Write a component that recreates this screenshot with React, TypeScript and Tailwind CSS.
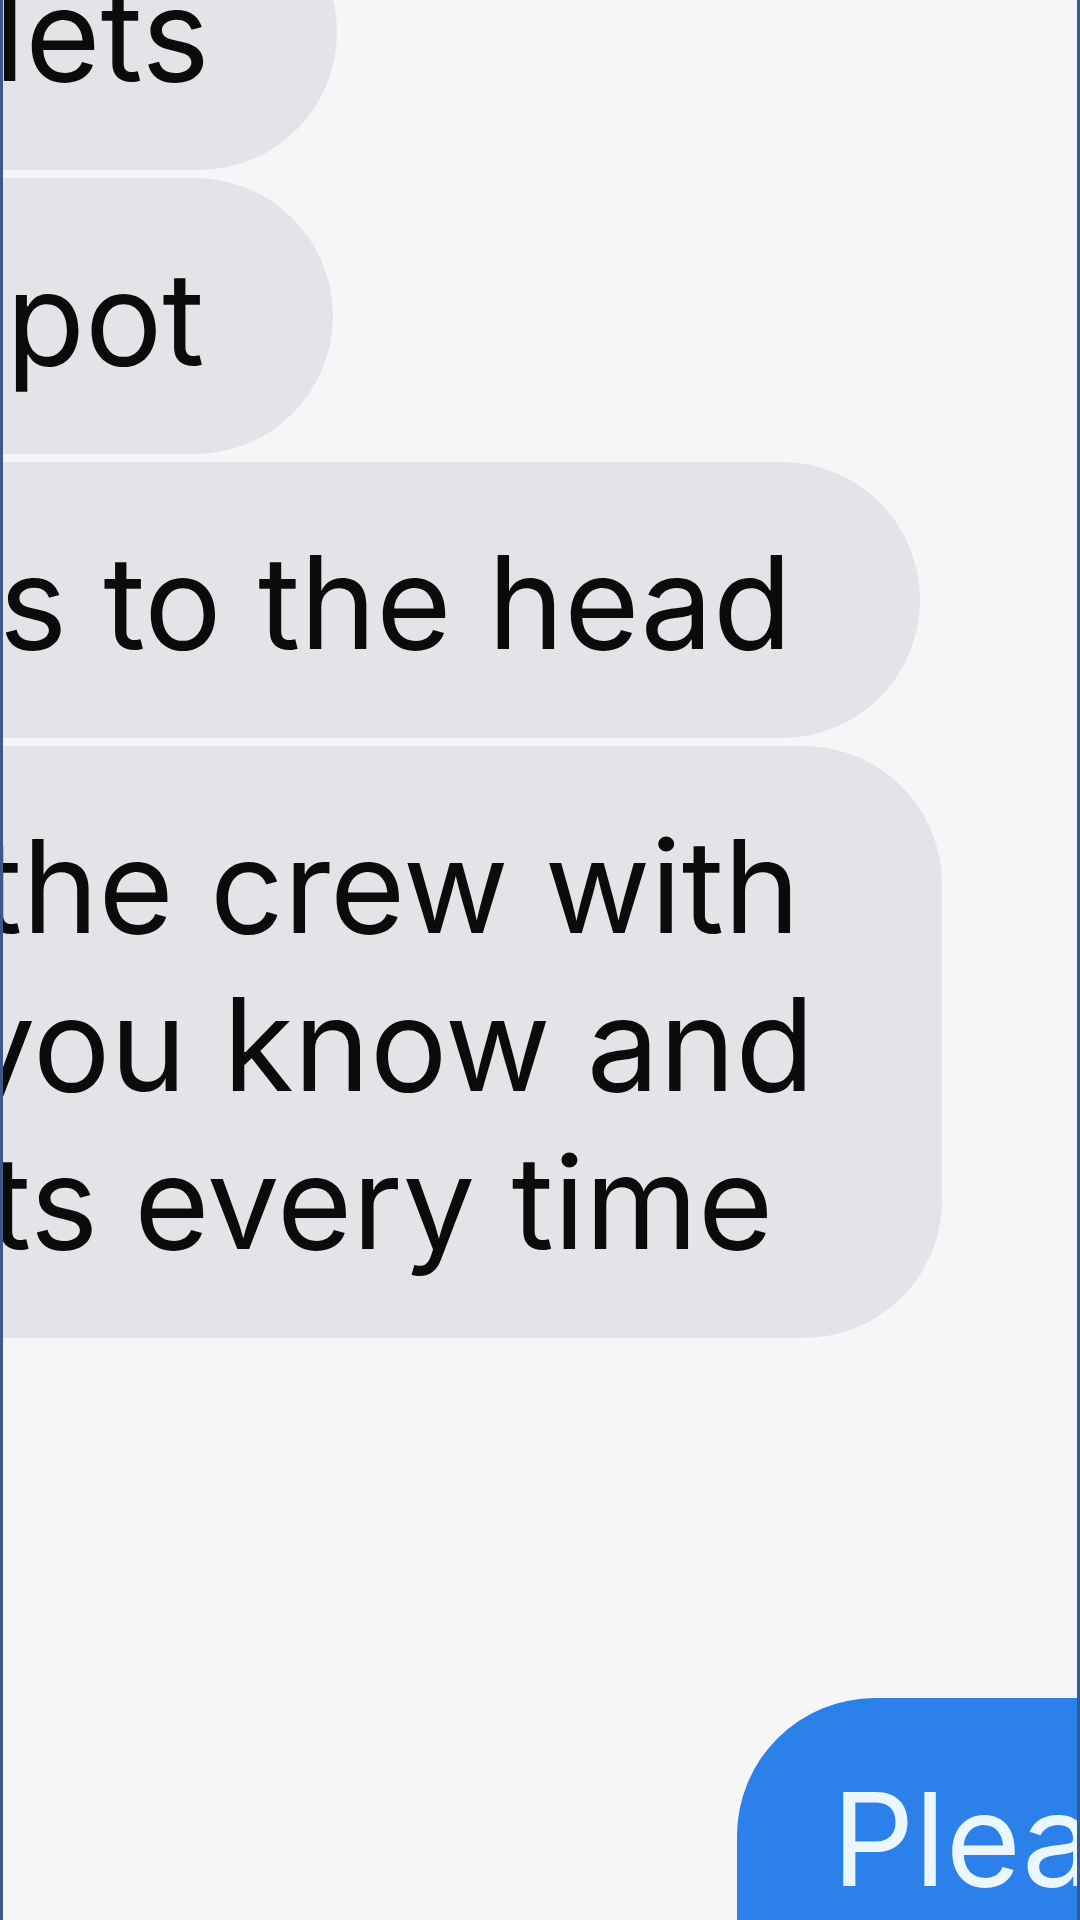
import React from "react";

type Line = { text: string; cls: string };

function Bubble({ lines }: { lines: Line[] }) {
  return (
    <div className="w-fit -ml-[200px] pl-[200px] pr-[128px] pt-[61px] pb-[57px] rounded-[138px] bg-[#e3e3e8] text-[129px] leading-[158px] text-[#0b0b0b]">
      {lines.map((l, i) => (
        <div key={i} className={l.cls}>
          {l.text}
        </div>
      ))}
    </div>
  );
}

export default function App() {
  return (
    <div className="relative w-[1080px] h-[1920px] overflow-hidden bg-[#f6f6f8] font-['Inter','Noto_Sans',sans-serif]">
      <div className="flex flex-col items-start gap-[8px] -mt-[106px]">
        <Bubble lines={[{ text: "lets", cls: "whitespace-nowrap -ml-[6px]" }]} />
        <Bubble lines={[{ text: "pot", cls: "whitespace-nowrap ml-[6px]" }]} />
        <Bubble lines={[{ text: "ts to the head", cls: "whitespace-nowrap -ml-[42px]" }]} />
        <Bubble
          lines={[
            { text: "the crew with", cls: "whitespace-nowrap -ml-[20px]" },
            { text: "you know and", cls: "whitespace-nowrap -ml-[37px]" },
            { text: "ts every time", cls: "whitespace-nowrap -ml-[11px]" },
          ]}
        />
        <div className="mt-[352px] ml-[737px] w-[600px] h-[400px] rounded-[138px] bg-[#2b80e9] pl-[95px] pt-[62px] text-[129px] leading-[158px] text-[#eaf7ff] whitespace-nowrap">
          Please
        </div>
      </div>
      <div className="absolute left-0 top-0 h-full w-[3px] bg-[#3b5a8c]" />
      <div className="absolute right-0 top-0 h-full w-[3px] bg-[#2f5ba0]" />
    </div>
  );
}
